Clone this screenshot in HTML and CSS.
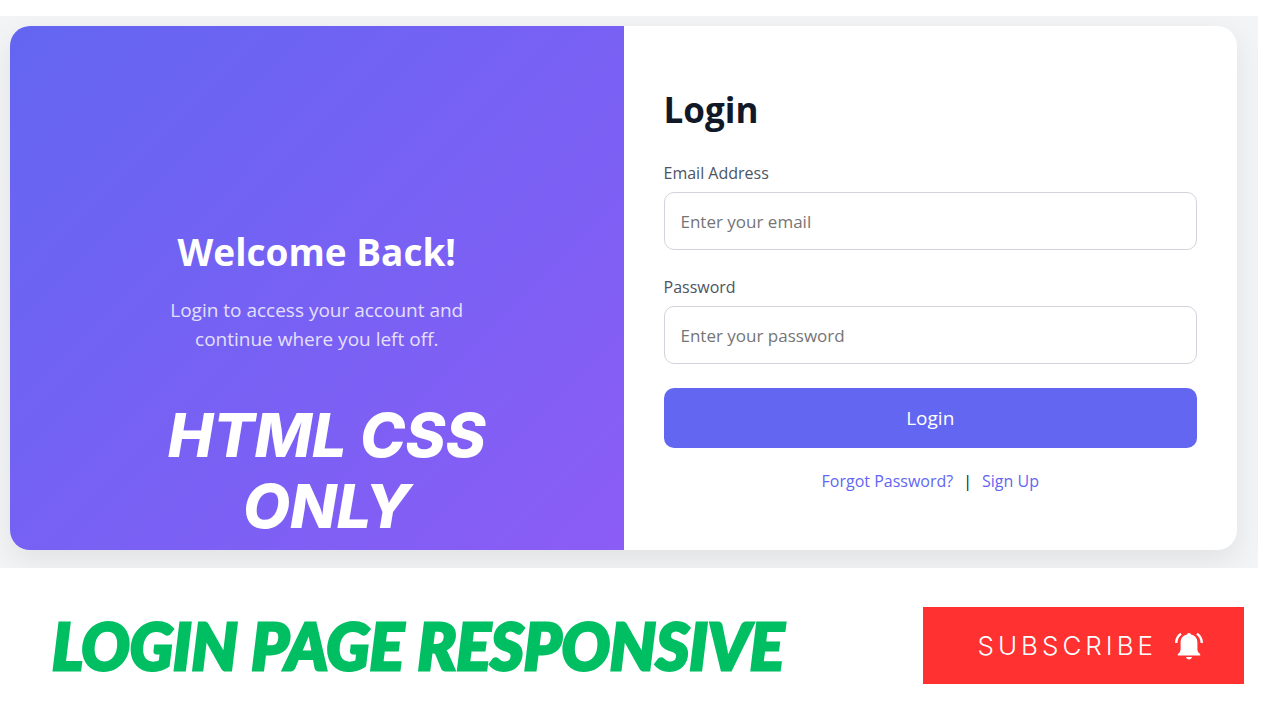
FILE: index.html
```html
<!DOCTYPE html>
<html lang="en">
<head>
<meta charset="utf-8">
<meta name="viewport" content="width=device-width, initial-scale=1">
<title>Login Page Responsive</title>
<link rel="stylesheet" href="styles.css">
</head>
<body>
<main class="stage">
  <div class="card">
    <section class="welcome">
      <h1 class="welcome-title">Welcome Back!</h1>
      <p class="welcome-text">Login to access your account and continue where you left off.</p>
      <p class="tagline">HTML CSS ONLY</p>
    </section>
    <form class="login">
      <h2 class="login-title">Login</h2>
      <label class="label" for="email">Email Address</label>
      <input class="field" id="email" type="email" placeholder="Enter your email">
      <label class="label" for="password">Password</label>
      <input class="field" id="password" type="password" placeholder="Enter your password">
      <button class="submit" type="submit">Login</button>
      <nav class="links">
        <a href="#forgot">Forgot Password?</a>
        <span>|</span>
        <a href="#signup">Sign Up</a>
      </nav>
    </form>
  </div>
</main>
<footer class="footer">
  <p class="banner">LOGIN PAGE RESPONSIVE</p>
  <button class="subscribe" type="button">
    <span>SUBSCRIBE</span>
    <svg class="bell" viewBox="0 0 28 28" aria-hidden="true">
      <path fill="#fff" d="M14 1c-1.200 0-2 .8-2 1.600C8 3.400 5.600 6.300 5.600 10.500v6.500c0 2.200-.7 3.700-2.800 5v1.500h22.400V22c-2.100-1.300-2.800-2.800-2.800-5v-6.500c0-4.200-2.400-7.100-6.400-7.900C16 1.800 15.200 1 14 1zM11 25h6c-.3 1.500-1.500 2.500-3 2.500s-2.700-1-3-2.500z"/>
      <path fill="none" stroke="#fff" stroke-width="2.400" d="M6 1.800C3 3.900 1.300 7 1.200 11M22 1.800c3 2.100 4.700 5.200 4.800 9.200"/>
    </svg>
  </button>
</footer>
</body>
</html>
```
FILE: styles.css
```css
* {
  box-sizing: border-box;
}

body {
  margin: 0;
  padding-top: 16px;
  background: #fff;
  font-family: "Open Sans", "Noto Sans", sans-serif;
}

h1, h2, p {
  margin: 0;
}

input, button {
  font: inherit;
}

.stage {
  margin-right: 22px;
  padding: 10px 21px 18px 10px;
  background: #f3f4f6;
  overflow: hidden;
}

.card {
  display: grid;
  grid-template-columns: 1fr 1fr;
  border-radius: 20px;
  overflow: hidden;
  background: #fff;
  box-shadow: 0 10px 30px rgba(0, 0, 0, 0.08);
}

.welcome {
  display: flex;
  flex-direction: column;
  align-items: center;
  justify-content: flex-end;
  padding: 40px 40px 8px;
  background: linear-gradient(135deg, #6366f1, #8b5cf6);
  color: #fff;
  text-align: center;
}

.welcome-title {
  font-size: 37px;
  line-height: 52px;
}

.welcome-text {
  max-width: 300px;
  margin-top: 18px;
  font-size: 19px;
  line-height: 29px;
  opacity: 0.8;
}

.tagline {
  max-width: 340px;
  margin: 46px 0 0 20px;
  font-family: Inter, sans-serif;
  font-size: 61px;
  font-style: italic;
  font-weight: 800;
  line-height: 71px;
}

.login {
  display: flex;
  flex-direction: column;
  padding: 58px 40px 56px;
}

.login-title {
  margin-bottom: 24px;
  color: #111827;
  font-size: 35px;
  line-height: 52px;
}

.label {
  margin-bottom: 6px;
  color: #4b5563;
  font-size: 16px;
  line-height: 26px;
}

.field {
  width: 100%;
  height: 58px;
  margin-bottom: 24px;
  padding: 0 16px;
  border: 1px solid #d1d5db;
  border-radius: 10px;
  background: #fff;
  font-size: 17px;
}

.field::placeholder {
  color: #757575;
}

.submit {
  height: 60px;
  border: 0;
  border-radius: 10px;
  background: #6366f1;
  color: #fff;
  font-size: 19px;
}

.links {
  display: flex;
  justify-content: center;
  gap: 10px;
  margin-top: 20px;
  color: #111827;
  font-size: 16px;
  line-height: 26px;
}

.links a {
  color: #6366f1;
  text-decoration: none;
}

.footer {
  display: flex;
  align-items: center;
  justify-content: space-between;
  padding: 39px 36px 36px 52px;
}

.banner {
  color: #00bf63;
  -webkit-text-stroke: 3px #00bf63;
  font-family: Lato, sans-serif;
  font-size: 64px;
  font-style: italic;
  font-weight: 900;
  line-height: 77px;
}

.subscribe {
  display: flex;
  align-items: center;
  justify-content: flex-end;
  gap: 18px;
  width: 321px;
  height: 77px;
  padding: 0 41px 0 0;
  border: 0;
  background: #ff3131;
  color: #fff;
  font-family: Inter, sans-serif;
  font-size: 26px;
  font-weight: 300;
  letter-spacing: 4px;
}

.bell {
  width: 28px;
  height: 28px;
}
```
